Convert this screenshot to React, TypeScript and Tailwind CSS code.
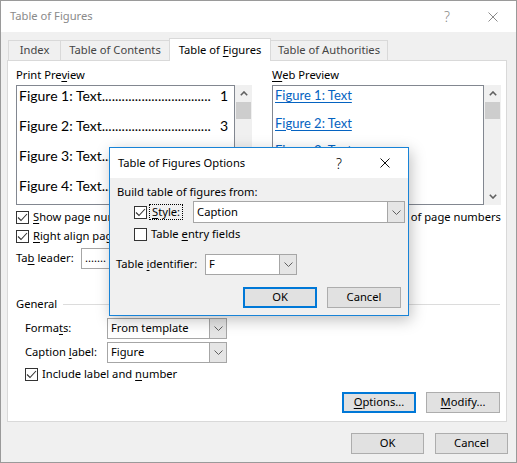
import { ReactNode } from "react";

const Chevron = () => (
  <svg width="9" height="5" viewBox="0 0 9 5">
    <polyline points="0.5,0.5 4.5,4.5 8.5,0.5" fill="none" stroke="#606060" strokeWidth="1" />
  </svg>
);

const Caret = ({ up }: { up?: boolean }) => (
  <svg width="8" height="5" viewBox="0 0 8 5">
    <polyline
      points={up ? "0.8,4.2 4,1 7.2,4.2" : "0.8,0.8 4,4 7.2,0.8"}
      fill="none"
      stroke="#606060"
      strokeWidth="1.6"
    />
  </svg>
);

const CloseX = ({ color }: { color: string }) => (
  <svg width="10" height="10" viewBox="0 0 10 10">
    <path d="M0.5 0.5 L9.5 9.5 M9.5 0.5 L0.5 9.5" stroke={color} strokeWidth="1" />
  </svg>
);

function Check({ checked }: { checked?: boolean }) {
  return (
    <span className="w-[13px] h-[13px] shrink-0 border border-[#333] bg-white flex items-center justify-center">
      {checked && (
        <svg width="11" height="9" viewBox="0 0 11 9">
          <polyline points="1,4.5 4,7.5 10,1" fill="none" stroke="#333" strokeWidth="1.1" />
        </svg>
      )}
    </span>
  );
}

function Key({ children }: { children: ReactNode }) {
  return <span className="underline decoration-1 underline-offset-[2px]">{children}</span>;
}

function Button({ children, focus, className }: { children: ReactNode; focus?: boolean; className: string }) {
  return (
    <div
      className={`h-[21px] flex items-center justify-center bg-[#e1e1e1] ${
        focus ? "border-2 border-[#0078d7]" : "border border-[#adadad]"
      } ${className}`}
    >
      {children}
    </div>
  );
}

function Combo({ value, className, h }: { value: string; className: string; h: string }) {
  return (
    <div className={`flex border border-[#a6a6a6] bg-white ${h} ${className}`}>
      <span className="flex-1 pl-[3px] flex items-center overflow-hidden whitespace-nowrap">{value}</span>
      <span className="w-[17px] border-l border-[#a6a6a6] bg-[#e5e5e5] flex items-center justify-center">
        <Chevron />
      </span>
    </div>
  );
}

function Scroll() {
  return (
    <div className="w-[17px] h-full bg-[#f0f0f0] flex flex-col items-center">
      <div className="h-[17px] flex items-center justify-center">
        <Caret up />
      </div>
      <div className="w-[15px] h-[17px] bg-[#cdcdcd]" />
      <div className="flex-1" />
      <div className="h-[17px] flex items-center justify-center">
        <Caret />
      </div>
    </div>
  );
}

const printItems = [
  ["Figure 1: Text", "1"],
  ["Figure 2: Text", "3"],
  ["Figure 3: Text", "5"],
  ["Figure 4: Text", "7"],
];

function OptionsDialog() {
  return (
    <div className="absolute left-[108px] top-[146px] w-[300px] h-[169px] border border-[#1883d7] bg-[#f0f0f0] flex flex-col shadow-[2px_4px_14px_rgba(0,0,0,0.25)]">
      <div className="h-[30px] bg-white flex items-center">
        <span className="flex-1 pl-[8px]">Table of Figures Options</span>
        <span className="w-[46px] flex justify-center text-[14px] font-light">?</span>
        <span className="w-[46px] flex justify-center">
          <CloseX color="#111" />
        </span>
      </div>
      <div className="flex-1 flex flex-col pt-[6px]">
        <div className="pl-[7px] leading-[16px]">Build table of figures from:</div>
        <div className="mt-[1px] h-[22px] flex items-center pl-[24px]">
          <Check checked />
          <span className="ml-[2px] px-[2px] border border-dotted border-black leading-[14px]">
            <Key>S</Key>tyle:
          </span>
          <Combo value="Caption" h="h-[22px]" className="ml-[10px] w-[212px]" />
        </div>
        <div className="mt-[2px] h-[19px] flex items-center pl-[24px] gap-[4px]">
          <Check />
          <span>
            Table <Key>e</Key>ntry fields
          </span>
        </div>
        <div className="mt-[10px] h-[21px] flex items-center pl-[6px]">
          <span className="w-[89px]">
            Table <Key>i</Key>dentifier:
          </span>
          <Combo value="F" h="h-[21px]" className="w-[92px]" />
        </div>
        <div className="mt-[12px] flex justify-end gap-[10px] pr-[7px]">
          <Button focus className="w-[74px]">OK</Button>
          <Button className="w-[74px]">Cancel</Button>
        </div>
      </div>
    </div>
  );
}

export default function App() {
  return (
    <div className="relative w-[517px] h-[463px] border border-[#9a9a9a] bg-[#f0f0f0] flex flex-col overflow-hidden font-['Noto_Sans',sans-serif] text-[11.2px] text-black">
      {/* title bar */}
      <div className="h-[31px] bg-white flex items-center text-[#8a8a8a]">
        <span className="flex-1 pl-[9px]">Table of Figures</span>
        <span className="w-[46px] flex justify-center text-[14px] font-light">?</span>
        <span className="w-[46px] flex justify-center">
          <CloseX color="#8a8a8a" />
        </span>
      </div>

      <div className="flex-1 flex flex-col pl-[6px] pt-[6px]">
        {/* tabs */}
        <div className="h-[22px] flex items-end pl-[1px] text-[#444]">
          <div className="w-[53px] h-[20px] border border-b-0 border-[#d9d9d9] flex items-center justify-center">Index</div>
          <div className="w-[108px] h-[20px] border-t border-[#d9d9d9] flex items-center justify-center">Table of Contents</div>
          <div className="relative z-10 -mb-px w-[102px] h-[23px] bg-white border border-b-0 border-[#d9d9d9] flex items-center justify-center text-black">
            <span>
              Table of <Key>F</Key>igures
            </span>
          </div>
          <div className="w-[117px] h-[20px] border-t border-r border-[#d9d9d9] flex items-center justify-center">Table of Authorities</div>
        </div>

        {/* tab panel */}
        <div className="w-[500px] h-[362px] border border-[#d9d9d9] bg-white flex flex-col pt-[6px] pl-[8px] pr-[6px] pb-[8px]">
          <div className="flex gap-[20px]">
            <div className="w-[236px] flex flex-col">
              <div className="leading-[16px]">
                Print Pre<Key>v</Key>iew
              </div>
              <div className="mt-[2px] h-[120px] flex">
                <div className="w-[219px] border border-[#828790] bg-white overflow-hidden flex flex-col gap-[10px] pl-[2px] pr-[6px] font-['Lato',sans-serif] text-[14px] leading-[20px]">
                  {printItems.map(([t, n]) => (
                    <div key={t} className="flex">
                      <span className="whitespace-nowrap">{t + ".".repeat(33)}</span>
                      <span className="ml-auto">{n}</span>
                    </div>
                  ))}
                </div>
                <Scroll />
              </div>
              <div className="mt-[3px] h-[19px] flex items-center gap-[4px]">
                <Check checked />
                <span>
                  <Key>S</Key>how page numbers
                </span>
              </div>
              <div className="h-[19px] flex items-center gap-[4px]">
                <Check checked />
                <span>
                  <Key>R</Key>ight align page numbers
                </span>
              </div>
              <div className="mt-[2px] h-[21px] flex items-center">
                <span className="w-[65px]">
                  Ta<Key>b</Key> leader:
                </span>
                <Combo value="......." h="h-[21px]" className="w-[154px]" />
              </div>
            </div>

            <div className="w-[229px] flex flex-col">
              <div className="leading-[16px]">
                <Key>W</Key>eb Preview
              </div>
              <div className="mt-[2px] h-[120px] flex">
                <div className="w-[212px] border border-[#828790] bg-white overflow-hidden flex flex-col gap-[9.5px] pl-[2px] font-['Lato',sans-serif] text-[13px] leading-[18px] text-[#0563c1]">
                  {["Figure 1: Text", "Figure 2: Text", "Figure 3: Text", "Figure 4: Text"].map((t) => (
                    <span key={t} className="underline decoration-1 underline-offset-[2px]">
                      {t}
                    </span>
                  ))}
                </div>
                <Scroll />
              </div>
              <div className="mt-[3px] h-[19px] flex items-center gap-[4px] whitespace-nowrap">
                <Check checked />
                <span>
                  Use <Key>h</Key>yperlinks instead of page numbers
                </span>
              </div>
            </div>
          </div>

          {/* general */}
          <div className="mt-[27px] h-[16px] flex items-center">
            <span>General</span>
            <span className="flex-1 ml-[6px] h-px bg-[#dcdcdc]" />
          </div>
          <div className="mt-[6px] h-[21px] flex items-center pl-[9px]">
            <span className="w-[82px]">
              Forma<Key>t</Key>s:
            </span>
            <Combo value="From template" h="h-[21px]" className="w-[120px]" />
          </div>
          <div className="mt-[3px] h-[21px] flex items-center pl-[9px]">
            <span className="w-[82px]">
              Caption <Key>l</Key>abel:
            </span>
            <Combo value="Figure" h="h-[21px]" className="w-[120px]" />
          </div>
          <div className="mt-[2px] h-[19px] flex items-center pl-[9px] gap-[4px]">
            <Check checked />
            <span>
              Include label and <Key>n</Key>umber
            </span>
          </div>
          <div className="mt-auto flex justify-end gap-[10px]">
            <Button focus className="w-[74px]">
              <span>
                <Key>O</Key>ptions...
              </span>
            </Button>
            <Button className="w-[74px]">
              <span>
                <Key>M</Key>odify...
              </span>
            </Button>
          </div>
        </div>

        {/* footer */}
        <div className="mt-[11px] flex justify-end gap-[11px] pr-[8px]">
          <Button className="w-[73px]">OK</Button>
          <Button className="w-[73px]">Cancel</Button>
        </div>
      </div>

      <OptionsDialog />
    </div>
  );
}
